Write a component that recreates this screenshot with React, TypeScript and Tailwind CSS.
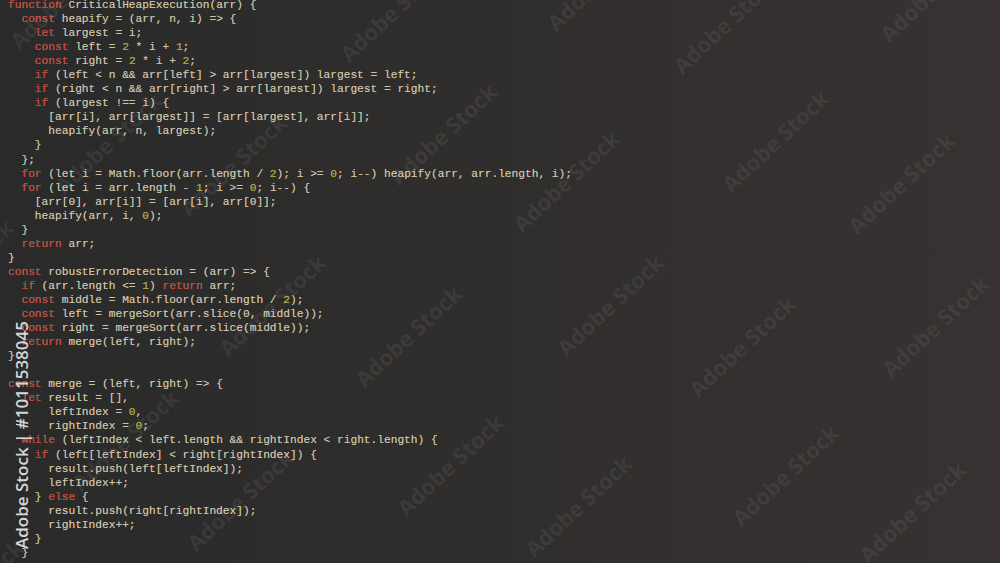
import React from 'react';

// « » = keyword (red), ‹ › = number (olive)
const code: string[] = [
  '«function» CriticalHeapExecution(arr) {',
  '  «const» heapify = (arr, n, i) => {',
  '    «let» largest = i;',
  '    «const» left = ‹2› * i + ‹1›;',
  '    «const» right = ‹2› * i + ‹2›;',
  '    «if» (left < n && arr[left] > arr[largest]) largest = left;',
  '    «if» (right < n && arr[right] > arr[largest]) largest = right;',
  '    «if» (largest !== i) {',
  '      [arr[i], arr[largest]] = [arr[largest], arr[i]];',
  '      heapify(arr, n, largest);',
  '    }',
  '  };',
  '  «for» (let i = Math.floor(arr.length / ‹2›); i >= ‹0›; i--) heapify(arr, arr.length, i);',
  '  «for» (let i = arr.length - ‹1›; i >= ‹0›; i--) {',
  '    [arr[0], arr[i]] = [arr[i], arr[0]];',
  '    heapify(arr, i, ‹0›);',
  '  }',
  '  «return» arr;',
  '}',
  '«const» robustErrorDetection = (arr) => {',
  '  «if» (arr.length <= ‹1›) «return» arr;',
  '  «const» middle = Math.floor(arr.length / ‹2›);',
  '  «const» left = mergeSort(arr.slice(0, middle));',
  '  «const» right = mergeSort(arr.slice(middle));',
  '  «return» merge(left, right);',
  '}',
  '',
  '«const» merge = (left, right) => {',
  '  «let» result = [],',
  '      leftIndex = ‹0›,',
  '      rightIndex = ‹0›;',
  '  «while» (leftIndex < left.length && rightIndex < right.length) {',
  '    «if» (left[leftIndex] < right[rightIndex]) {',
  '      result.push(left[leftIndex]);',
  '      leftIndex++;',
  '    } «else» {',
  '      result.push(right[rightIndex]);',
  '      rightIndex++;',
  '    }',
  '  }',
];

const watermarks: [number, number][] = [
  [63, -2], [393, 11], [600, -20], [726, 23], [933, -9],
  [108, 143], [233, 165], [443, 134], [566, 181], [775, 141], [901, 183],
  [-40, 270], [272, 305], [408, 336], [610, 305], [742, 346], [935, 326],
  [125, 440], [240, 500], [450, 465], [578, 506], [785, 475], [912, 512],
  [-30, 590],
];

function CodeLine({ line }: { line: string }) {
  const parts = line.split(/(«[^»]*»|‹[^›]*›)/).filter(p => p.length > 0);
  return (
    <div className="h-[14.05px] whitespace-pre">
      {parts.map((p, i) => {
        if (p.startsWith('«')) {
          return <span key={i} className="text-[#c63b2d]">{p.slice(1, -1)}</span>;
        }
        if (p.startsWith('‹')) {
          return <span key={i} className="text-[#aca82b]">{p.slice(1, -1)}</span>;
        }
        return <span key={i}>{p}</span>;
      })}
      {line === '' ? ' ' : null}
    </div>
  );
}

export default function App() {
  return (
    <div className="relative w-[1000px] h-[563px] overflow-hidden bg-gradient-to-r from-[#2a2a2a] via-[#302e2d] to-[#373231]">
      <div
        className="pl-[8px] mt-[-2px] text-[11.2px] leading-[14.05px] text-[#cdc2a6] [text-shadow:0_0_0.6px_rgba(205,194,166,0.7)]"
        style={{ fontFamily: '"Liberation Mono", "DejaVu Sans Mono", monospace' }}
      >
        {code.map((line, i) => (
          <CodeLine key={i} line={line} />
        ))}
      </div>

      {watermarks.map(([x, y], i) => (
        <span
          key={i}
          className="absolute -translate-x-1/2 -translate-y-1/2 -rotate-[43deg] whitespace-nowrap text-[22px] font-bold text-white/[0.08] pointer-events-none"
          style={{ left: x, top: y, fontFamily: '"Open Sans", "Noto Sans", sans-serif' }}
        >
          Adobe Stock
        </span>
      ))}

      <span
        className="absolute left-[22px] top-[435px] -translate-x-1/2 -translate-y-1/2 -rotate-90 whitespace-nowrap text-[17px] font-semibold text-[#d6d6d6]"
        style={{ fontFamily: '"Open Sans", "Noto Sans", sans-serif' }}
      >
        Adobe Stock | #1011538045
      </span>
    </div>
  );
}
